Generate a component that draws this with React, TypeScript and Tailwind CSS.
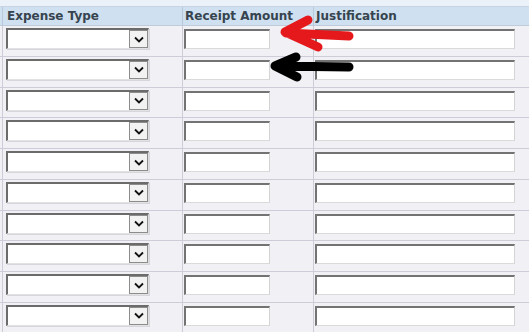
import React from 'react';

const rows = Array.from({ length: 10 }, (_, i) => i);

function SelectBox() {
  return (
    <div className="flex h-[21px] w-[143px] bg-white border-t-2 border-l-2 border-[#6b6b6b] border-r border-b border-r-[#dcdcdc] border-b-[#e2e2e2] shadow-[1px_1px_0_#d6d6dc]">
      <div className="flex-1" />
      <div className="flex h-full w-[19px] items-center justify-center bg-[#f2f2f2] border border-[#8c8c8c]">
        <svg width="10" height="7" viewBox="0 0 10 7">
          <path d="M1 1.5 L5 5.5 L9 1.5" fill="none" stroke="#111" strokeWidth="1.8" />
        </svg>
      </div>
    </div>
  );
}

function TextBox({ width }: { width: string }) {
  return (
    <div
      className={`${width} h-[20px] bg-white border-t-2 border-l-2 border-[#737373] border-r border-b border-r-[#d4d4d4] border-b-[#dadada]`}
    />
  );
}

export default function App() {
  return (
    <div className="relative h-[332px] w-[529px] overflow-hidden bg-[#f0f0f5] font-['DejaVu_Sans',sans-serif]">
      <div className="h-[7px] bg-[#eaf1f9] border-b border-[#c6d4e4]" />
      <div className="flex h-[19px] bg-[#cfe0f0] border-b border-[#bdcbdb] pl-[2px] text-[12px] font-bold leading-none text-[#36444f]">
        <div className="flex w-[180px] items-center border-l border-[#b9c9da] pl-[4px]">Expense Type</div>
        <div className="flex w-[131px] items-center border-l border-[#b9c9da] pl-[2px]">Receipt Amount</div>
        <div className="flex flex-1 items-center border-l border-[#b9c9da] pl-[2px]">Justification</div>
      </div>
      {rows.map((r) => (
        <div key={r} className="flex h-[30.78px] border-b border-[#cdcdd9] pl-[2px]">
          <div className="w-[180px] border-l border-[#cdcdd9] pl-[3px] pt-[2px]">
            <SelectBox />
          </div>
          <div className="w-[131px] border-l border-[#cdcdd9] pl-[1px] pt-[3px]">
            <TextBox width="w-[86px]" />
          </div>
          <div className="flex-1 border-l border-[#cdcdd9] pl-[1px] pt-[3px]">
            <TextBox width="w-[200px]" />
          </div>
        </div>
      ))}
      {/* hand-drawn annotation arrows */}
      <svg className="pointer-events-none absolute left-0 top-0" width="529" height="332" viewBox="0 0 529 332">
        <path d="M308 20 L285 32 L318 47 M286 33 L349 36" fill="none" stroke="#e5191c" strokeWidth="9" strokeLinecap="round" strokeLinejoin="round" />
        <path d="M296 57 L275 66 L297 77 M276 66 L349 67" fill="none" stroke="#000" strokeWidth="9" strokeLinecap="round" strokeLinejoin="round" />
      </svg>
    </div>
  );
}
